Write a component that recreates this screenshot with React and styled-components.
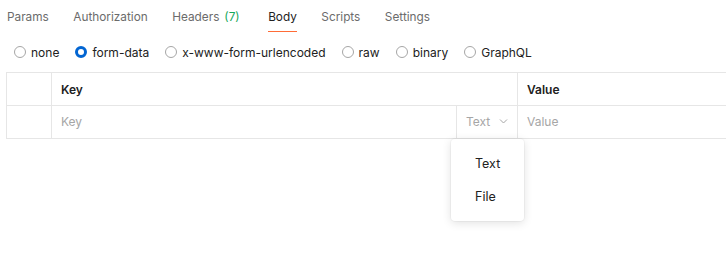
import React from "react";
import styled, { createGlobalStyle } from "styled-components";

const Global = createGlobalStyle`
  html, body { margin: 0; padding: 0; background: #fff; }
  body { font-family: Inter, "Noto Sans", sans-serif; font-size: 12px; color: #212121; }
  * { box-sizing: border-box; }
`;

const Page = styled.div`
  width: 726px;
  height: 260px;
  overflow: hidden;
  position: relative;
`;

const Tabs = styled.div`
  display: flex;
  gap: 24.5px;
  padding-left: 7px;
  height: 32px;
  align-items: stretch;
`;

const Tab = styled.div`
  display: flex;
  align-items: center;
  padding-top: 3px;
  font-size: 11.8px;
  color: ${(p) => (p.$active ? "#212121" : "#6b6b6b")};
  border-bottom: 1px solid ${(p) => (p.$active ? "#ff6c37" : "transparent")};
`;

const Count = styled.span`
  color: #14a85a;
  margin-left: 5px;
  margin-right: 4px;
`;

const Radios = styled.div`
  display: flex;
  align-items: center;
  gap: 16px;
  padding-left: 14px;
  height: 40px;
`;

const RadioItem = styled.label`
  display: flex;
  align-items: center;
  gap: 5px;
  font-size: 12px;
  color: #212121;
`;

const Circle = styled.span`
  width: 12px;
  height: 12px;
  border-radius: 50%;
  border: ${(p) => (p.$on ? "3.5px solid #0265d2" : "1px solid #a6a6a6")};
  background: #fff;
`;

const Table = styled.div`
  margin-left: 6px;
  width: 722px;
  display: grid;
  grid-template-columns: 45px 405px 61px 1fr;
  grid-auto-rows: 33px;
  border-top: 1px solid #e6e6e6;
  border-left: 1px solid #e6e6e6;
  position: relative;
`;

const Cell = styled.div`
  display: flex;
  align-items: center;
  padding-left: 9px;
  padding-bottom: ${(p) => (p.$head ? 0 : 2)}px;
  border-right: 1px solid #e6e6e6;
  border-bottom: 1px solid #e6e6e6;
  grid-column: ${(p) => p.$span || "auto"};
  font-size: 12px;
  font-weight: ${(p) => (p.$head ? 600 : 400)};
  color: ${(p) => (p.$head ? "#212121" : "#a6a6a6")};
  position: relative;
`;

const TypeCell = styled(Cell)`
  padding-left: 9px;
  gap: 9px;
`;

const Menu = styled.div`
  position: absolute;
  left: -6px;
  top: 33px;
  width: 73px;
  padding: 8px 0;
  background: #fff;
  border-radius: 4px;
  box-shadow: 0 2px 10px rgba(0, 0, 0, 0.12), 0 0 0 1px rgba(0, 0, 0, 0.03);
  z-index: 2;
`;

const MenuItem = styled.div`
  height: 33px;
  display: flex;
  align-items: center;
  padding-left: 24px;
  font-size: 12.5px;
  font-weight: 400;
  color: #212121;
`;

const tabs = ["Params", "Authorization", "Headers", "Body", "Scripts", "Settings"];
const radios = ["none", "form-data", "x-www-form-urlencoded", "raw", "binary", "GraphQL"];

export default function App() {
  return (
    <Page>
      <Global />
      <Tabs>
        {tabs.map((t) => (
          <Tab key={t} $active={t === "Body"}>
            {t}
            {t === "Headers" && <Count>(7)</Count>}
          </Tab>
        ))}
      </Tabs>
      <Radios>
        {radios.map((r) => (
          <RadioItem key={r}>
            <Circle $on={r === "form-data"} />
            {r}
          </RadioItem>
        ))}
      </Radios>
      <Table>
        <Cell $head />
        <Cell $head $span="span 2">Key</Cell>
        <Cell $head>Value</Cell>
        <Cell />
        <Cell>Key</Cell>
        <TypeCell>
          Text
          <svg width="9" height="6" viewBox="0 0 9 6" fill="none">
            <path d="M1 1.5L4.5 5L8 1.5" stroke="#a6a6a6" strokeWidth="1" />
          </svg>
          <Menu>
            <MenuItem>Text</MenuItem>
            <MenuItem>File</MenuItem>
          </Menu>
        </TypeCell>
        <Cell>Value</Cell>
      </Table>
    </Page>
  );
}
